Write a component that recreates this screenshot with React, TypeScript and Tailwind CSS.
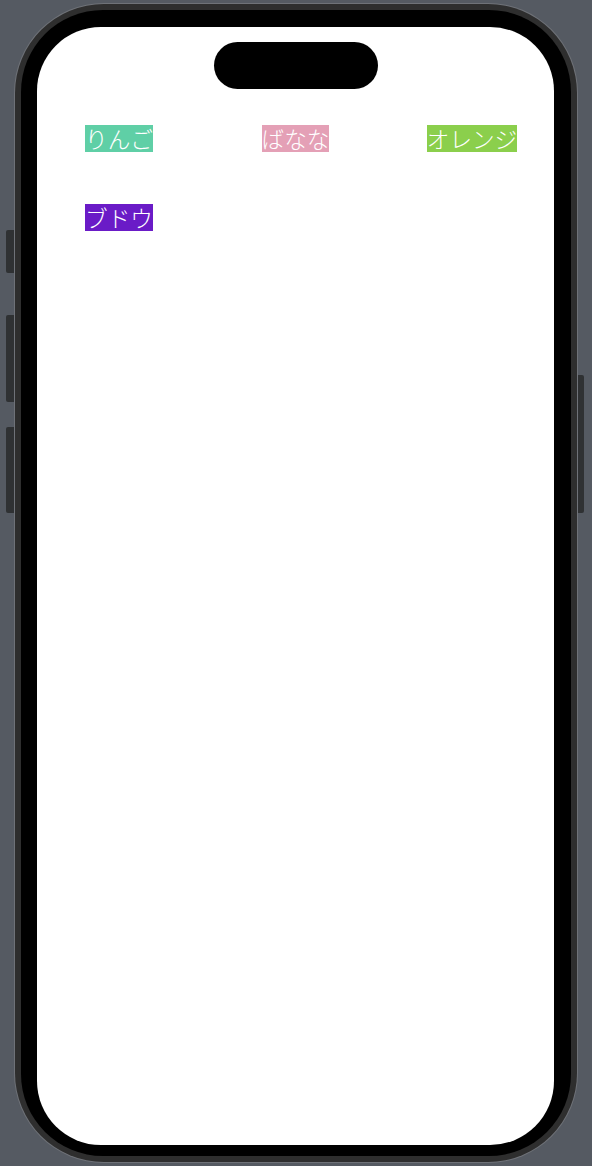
const fruits = [
  { name: "りんご", color: "bg-[#5fcfa6]" },
  { name: "ばなな", color: "bg-[#e4a0b6]" },
  { name: "オレンジ", color: "bg-[#8bcf4c]" },
  { name: "ブドウ", color: "bg-[#6a1bc7]" },
];

function Tag({ name, color }: { name: string; color: string }) {
  return (
    <span
      className={`${color} justify-self-center h-[27px] text-[22.6px] font-light leading-[27px] text-white whitespace-nowrap`}
      style={{ fontFamily: '"Noto Sans CJK JP", "Noto Sans", sans-serif' }}
    >
      {name}
    </span>
  );
}

export default function App() {
  return (
    <div className="relative w-[592px] h-[1166px] bg-[#555a62] overflow-hidden">
      {/* side buttons */}
      <div className="absolute left-[6px] top-[230px] w-[8px] h-[43px] rounded-l-[2px] bg-[#2f3133]" />
      <div className="absolute left-[6px] top-[315px] w-[8px] h-[87px] rounded-l-[2px] bg-[#2f3133]" />
      <div className="absolute left-[6px] top-[427px] w-[8px] h-[86px] rounded-l-[2px] bg-[#2f3133]" />
      <div className="absolute left-[577px] top-[375px] w-[7px] h-[138px] rounded-r-[2px] bg-[#2f3133]" />

      {/* phone body */}
      <div className="relative ml-[14px] mt-[3px] w-[564px] h-[1160px] rounded-[90px] bg-[#6f7278] p-px">
        <div className="w-full h-full rounded-[89px] bg-[#2e2e2e] p-[6px]">
          <div className="flex flex-col w-full h-full rounded-[82px] bg-black pt-[17px] pl-[16px] pr-[17px] pb-[11px]">
            {/* screen */}
            <div className="flex flex-col flex-1 rounded-[64px] bg-white pt-[15px]">
              <div className="self-center w-[164px] h-[47px] rounded-full bg-black" />
              <div className="grid grid-cols-[repeat(3,160px)] justify-center gap-x-[16.5px] gap-y-[52px] mt-[36px]">
                {fruits.map((f) => (
                  <Tag key={f.name} name={f.name} color={f.color} />
                ))}
              </div>
            </div>
          </div>
        </div>
      </div>
    </div>
  );
}
